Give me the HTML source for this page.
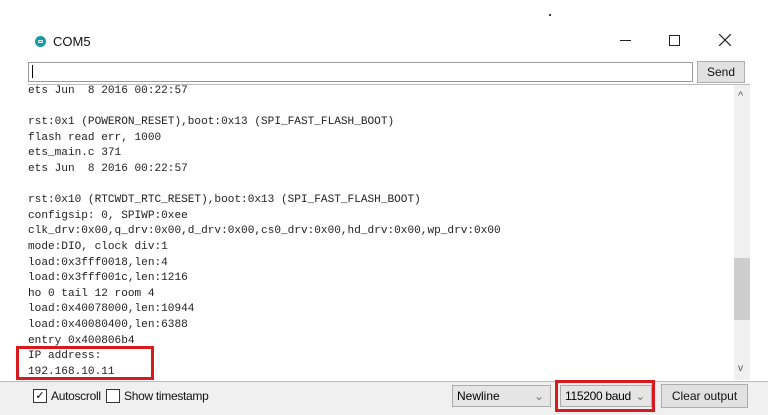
<!DOCTYPE html><html><head><style>
body{margin:0;width:768px;height:414px;background:#fff;position:relative;overflow:hidden;font-family:"Liberation Sans",sans-serif}
.a{position:absolute}
pre{margin:0;font-family:"Liberation Mono",monospace;font-size:11.1px;line-height:15.6px;color:#222}
.btn{position:absolute;background:#e1e1e1;border:1px solid #adadad;font-size:12px;color:#111;text-align:center;box-sizing:border-box}
</style></head><body>
<div class="a" style="left:549px;top:14px;width:2px;height:2px;background:#444"></div>
<div class="a" style="left:35px;top:36px;width:11px;height:11px;border-radius:50%;background:#1a9aa0"></div>
<div class="a" style="left:38px;top:40px;width:5px;height:3px;border:1px solid #fff;border-radius:2px;box-sizing:border-box"></div>
<div class="a" style="left:53px;top:34px;font-size:13px;color:#111">COM5</div>
<div class="a" style="left:620px;top:40px;width:11px;height:1px;background:#222"></div>
<div class="a" style="left:669px;top:35px;width:11px;height:11px;border:1px solid #222;box-sizing:border-box"></div>
<svg class="a" style="left:719px;top:34px" width="12" height="12"><path d="M0 0L12 12M12 0L0 12" stroke="#222" stroke-width="1.2"/></svg>
<div class="a" style="left:28px;top:62px;width:665px;height:20px;border:1px solid #9a9a9a;box-sizing:border-box;background:#fff"></div>
<div class="a" style="left:32px;top:65px;width:1px;height:13px;background:#000"></div>
<div class="btn" style="left:697px;top:61px;width:48px;height:22px;line-height:20px">Send</div>
<pre class="a" style="left:28px;top:84px">ets Jun  8 2016 00:22:57

rst:0x1 (POWERON_RESET),boot:0x13 (SPI_FAST_FLASH_BOOT)
flash read err, 1000
ets_main.c 371
ets Jun  8 2016 00:22:57

rst:0x10 (RTCWDT_RTC_RESET),boot:0x13 (SPI_FAST_FLASH_BOOT)
configsip: 0, SPIWP:0xee
clk_drv:0x00,q_drv:0x00,d_drv:0x00,cs0_drv:0x00,hd_drv:0x00,wp_drv:0x00
mode:DIO, clock div:1
load:0x3fff0018,len:4
load:0x3fff001c,len:1216
ho 0 tail 12 room 4
load:0x40078000,len:10944
load:0x40080400,len:6388
entry 0x400806b4
IP address:
192.168.10.11</pre>
<div class="a" style="left:28px;top:84px;width:722px;height:1px;background:#bbb"></div>
<div class="a" style="left:734px;top:85px;width:16px;height:295px;background:#f0f0f0"></div>
<div class="a" style="left:734px;top:258px;width:16px;height:62px;background:#cdcdcd"></div>
<div class="a" style="left:738px;top:90px;font-size:11px;color:#555">^</div>
<div class="a" style="left:738px;top:363px;font-size:10px;color:#555">v</div>
<div class="a" style="left:16px;top:346px;width:138px;height:34px;border:3px solid #d71920;box-sizing:border-box"></div>
<div class="a" style="left:0;top:381px;width:768px;height:33px;background:#f0f0f0;border-top:1px solid #bbb"></div>
<div class="a" style="left:33px;top:389px;width:14px;height:14px;border:1px solid #333;background:#fff;box-sizing:border-box;font-size:11px;line-height:12px;text-align:center">✓</div>
<div class="a" style="left:51px;top:389px;font-size:12px;color:#111;letter-spacing:-0.3px">Autoscroll</div>
<div class="a" style="left:106px;top:389px;width:14px;height:14px;border:1px solid #333;background:#fff;box-sizing:border-box"></div>
<div class="a" style="left:124px;top:389px;font-size:12px;color:#111;letter-spacing:-0.3px">Show timestamp</div>
<div class="a" style="left:452px;top:385px;width:99px;height:22px;border:1px solid #adadad;background:#e5e5e5;box-sizing:border-box;font-size:12px;padding:3px 0 0 4px">Newline<span style="position:absolute;right:6px;top:3px;color:#777">⌄</span></div>
<div class="a" style="left:560px;top:385px;width:92px;height:22px;border:1px solid #adadad;background:#e5e5e5;box-sizing:border-box;font-size:12px;padding:3px 0 0 4px;letter-spacing:-0.3px">115200 baud<span style="position:absolute;right:6px;top:3px;color:#777">⌄</span></div>
<div class="a" style="left:555px;top:380px;width:100px;height:32px;border:3px solid #d71920;box-sizing:border-box"></div>
<div class="btn" style="left:661px;top:384px;width:87px;height:24px;line-height:22px">Clear output</div>
</body></html>
